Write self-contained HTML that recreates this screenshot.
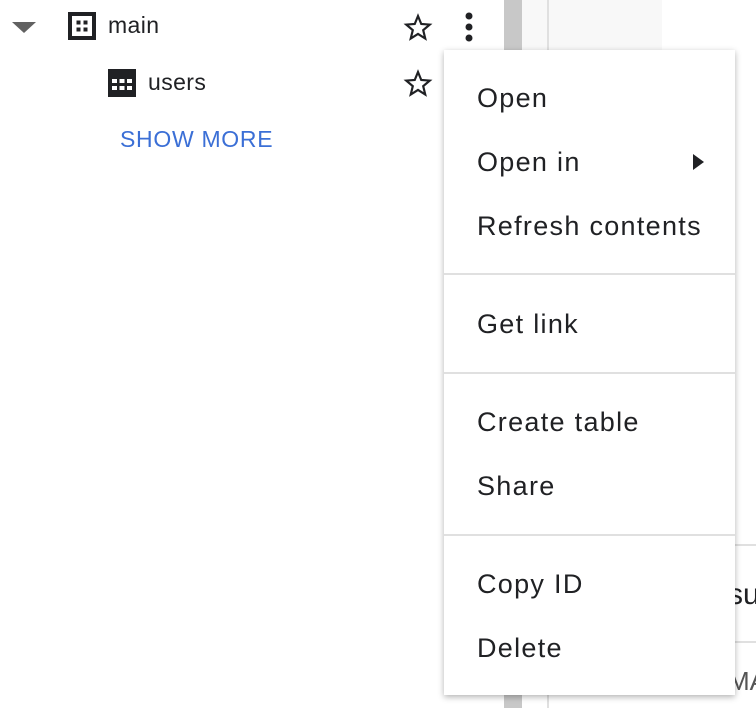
<!DOCTYPE html>
<html><head><meta charset="utf-8"><style>
body{margin:0;width:756px;height:708px;overflow:hidden;background:#fff;font-family:"Liberation Sans",Arial,sans-serif;position:relative}
.a{position:absolute}
.t{color:#202124;font-size:23px;letter-spacing:0.4px}
.mi{position:absolute;left:33px;font-size:27px;letter-spacing:1.3px;color:#202124;line-height:30px}
.dv{position:absolute;left:0;right:0;height:2px;background:#e0e0e0}
</style></head><body>
<div class="a" style="left:504px;top:0;width:18px;height:708px;background:#c8c8c8"></div>
<div class="a" style="left:522px;top:0;width:140px;height:50px;background:#f8f8f8"></div>
<div class="a" style="left:547px;top:0;width:2px;height:708px;background:#e0e0e0"></div>
<div class="a" style="left:549px;top:544px;width:207px;height:2px;background:#e0e0e0"></div>
<div class="a" style="left:549px;top:641px;width:207px;height:2px;background:#e0e0e0"></div>
<div class="a" style="left:728px;top:578px;font-size:30px;color:#202124">su</div>
<div class="a" style="left:728px;top:666px;font-size:26px;color:#555">MA</div>

<svg class="a" style="left:12px;top:22px" width="24" height="12"><polygon points="0,0 24,0 12,11" fill="#616161"/></svg>
<svg class="a" style="left:68px;top:12px" width="28" height="28"><rect x="2" y="2" width="24" height="24" fill="none" stroke="#202124" stroke-width="4"/><rect x="8.5" y="8.5" width="4" height="4" fill="#202124"/><rect x="15.5" y="8.5" width="4" height="4" fill="#202124"/><rect x="8.5" y="15.5" width="4" height="4" fill="#202124"/><rect x="15.5" y="15.5" width="4" height="4" fill="#202124"/></svg>
<div class="a t" style="left:108px;top:12px">main</div>
<svg class="a" style="left:108px;top:69px" width="28" height="28"><rect x="0" y="0" width="28" height="28" fill="#202124"/><g fill="#fff"><rect x="4" y="10" width="5" height="4"/><rect x="11.5" y="10" width="5" height="4"/><rect x="19" y="10" width="5" height="4"/><rect x="4" y="17" width="5" height="4"/><rect x="11.5" y="17" width="5" height="4"/><rect x="19" y="17" width="5" height="4"/></g></svg>
<div class="a t" style="left:148px;top:69px">users</div>
<div class="a" style="left:120px;top:126px;font-size:23px;letter-spacing:0.7px;color:#3b6fd6">SHOW MORE</div>

<svg class="a" style="left:403px;top:13px" width="30" height="29" viewBox="0 0 24 24"><path d="M12 2.5l2.7 6.6 7 .5-5.4 4.6 1.7 6.9L12 17.3l-6 3.8 1.7-6.9L2.3 9.6l7-.5z" fill="none" stroke="#202124" stroke-width="1.8" stroke-linejoin="miter"/></svg>
<svg class="a" style="left:403px;top:69px" width="30" height="29" viewBox="0 0 24 24"><path d="M12 2.5l2.7 6.6 7 .5-5.4 4.6 1.7 6.9L12 17.3l-6 3.8 1.7-6.9L2.3 9.6l7-.5z" fill="none" stroke="#202124" stroke-width="1.8"/></svg>
<svg class="a" style="left:462px;top:12px" width="14" height="30"><circle cx="7" cy="4" r="3.5" fill="#202124"/><circle cx="7" cy="15" r="3.5" fill="#202124"/><circle cx="7" cy="26" r="3.5" fill="#202124"/></svg>

<div class="a" style="left:444px;top:50px;width:291px;height:645px;background:#fff;box-shadow:0 2px 6px rgba(0,0,0,.3)">
<div class="mi" style="top:33px">Open</div>
<div class="mi" style="top:97px">Open in</div>
<svg class="a" style="left:249px;top:104px" width="12" height="16"><polygon points="0,0 11,8 0,16" fill="#202124"/></svg>
<div class="mi" style="top:161px">Refresh contents</div>
<div class="dv" style="top:223px"></div>
<div class="mi" style="top:259px">Get link</div>
<div class="dv" style="top:322px"></div>
<div class="mi" style="top:357px">Create table</div>
<div class="mi" style="top:421px">Share</div>
<div class="dv" style="top:484px"></div>
<div class="mi" style="top:519px">Copy ID</div>
<div class="mi" style="top:583px">Delete</div>
</div>
</body></html>
